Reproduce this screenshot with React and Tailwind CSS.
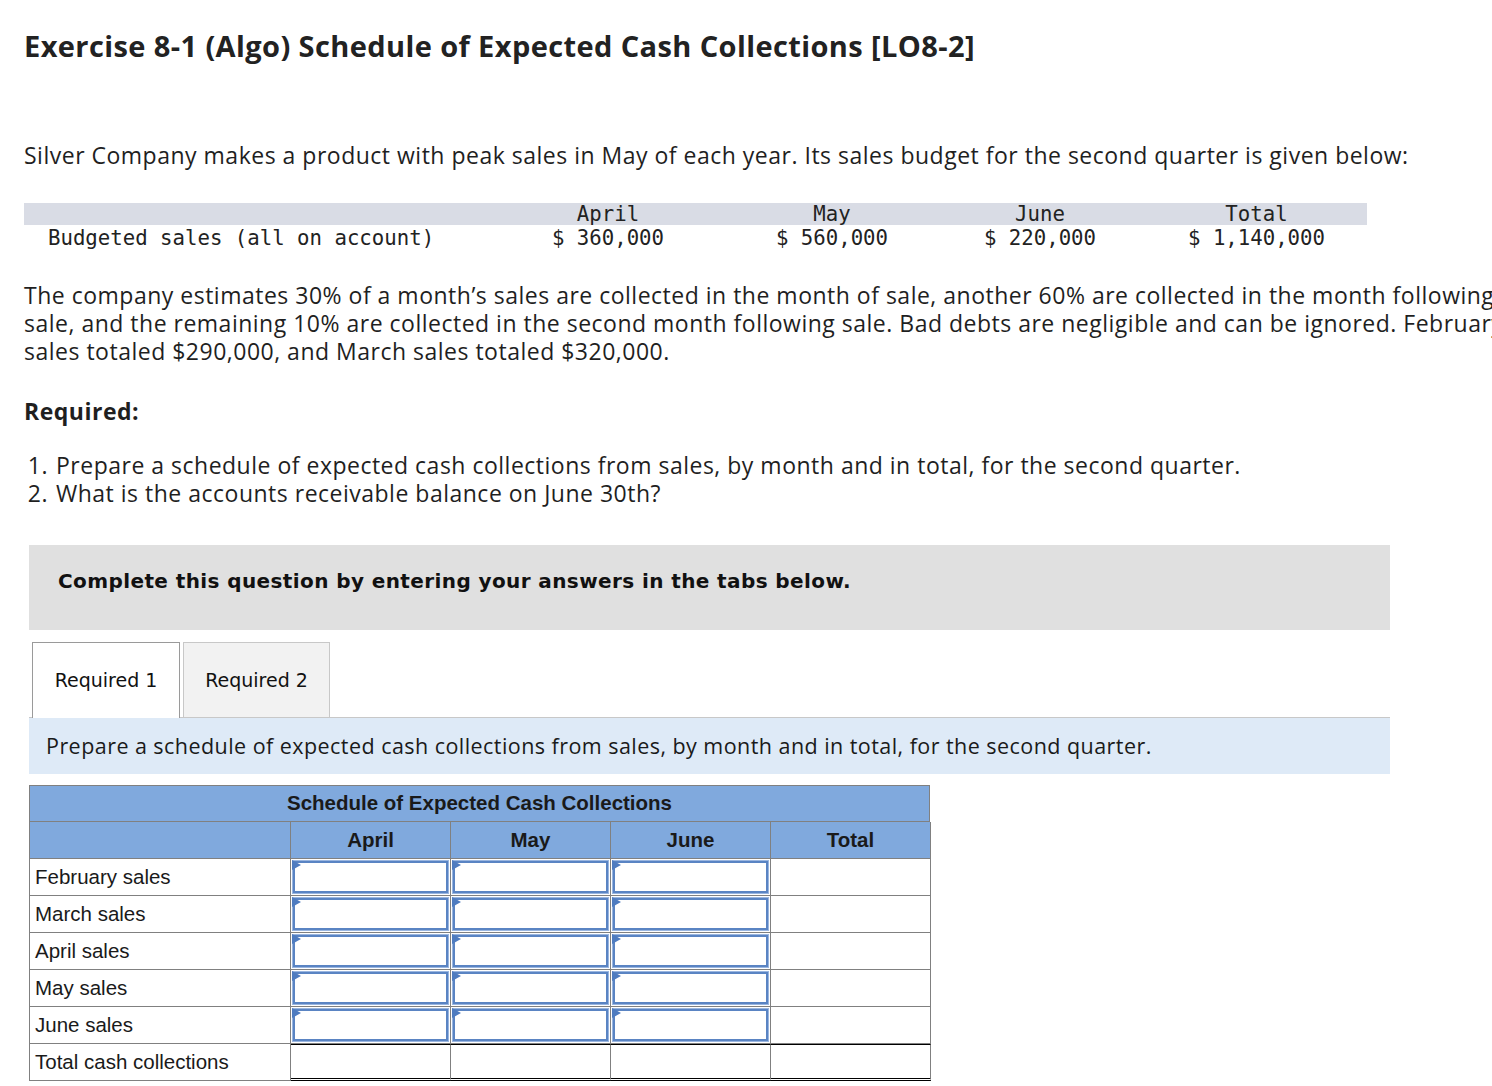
import React from 'react'

const body = { fontFamily: '"Open Sans", Lato, sans-serif' }
const verdana = { fontFamily: '"DejaVu Sans", Verdana, sans-serif' }
const arial = { fontFamily: '"Liberation Sans", Arial, sans-serif' }
const mono = { fontFamily: '"DejaVu Sans Mono", "Liberation Mono", monospace' }

const InputCell = () => (
    <div className="h-full p-[1px] border-r border-b border-[#808080]">
        <div className="relative h-full border border-[#9ab6e0]">
            <div className="h-full border-2 border-[#5a84c3]" />
            <svg className="absolute -left-[1px] -top-[1px]" width="9" height="10" viewBox="0 0 9 10">
                <polygon points="0,0 9,5 0,10" fill="#4f7cc0" />
            </svg>
        </div>
    </div>
)

const PlainCell = ({ children, className = '' }) => (
    <div className={"h-full border-r border-b border-[#808080] " + className}>{children}</div>
)

const App = () => {
    const budget = [
        { month: 'April', value: '$ 360,000' },
        { month: 'May', value: '$ 560,000' },
        { month: 'June', value: '$ 220,000' },
        { month: 'Total', value: '$ 1,140,000' },
    ]
    const rows = ['February sales', 'March sales', 'April sales', 'May sales', 'June sales']

    return (
        <div className="w-[1492px] overflow-hidden bg-white text-[#1f1f1f]" style={body}>
            <div className="pl-[24px] pt-[28px] pb-[40px]">
                <h1 className="text-[29px] leading-[36px] font-bold tracking-[0.4px] whitespace-nowrap text-[#222]">
                    Exercise 8-1 (Algo) Schedule of Expected Cash Collections [LO8-2]
                </h1>

                <p className="mt-[77px] text-[23px] leading-[28px] tracking-[0.5px] whitespace-nowrap">
                    Silver Company makes a product with peak sales in May of each year. Its sales budget for the second quarter is given below:
                </p>

                {/* budget table */}
                <div className="mt-[34px] w-[1343px] text-[20.7px] text-[#222]" style={mono}>
                    <div className="grid grid-cols-[472px_224px_224px_192px_241px] h-[22px] leading-[22px] bg-[#d9dce5]">
                        <div />
                        {budget.map((b) => (
                            <div key={b.month} className="text-center">{b.month}</div>
                        ))}
                    </div>
                    <div className="grid grid-cols-[472px_224px_224px_192px_241px] h-[26px] leading-[26px]">
                        <div className="pl-[24px] whitespace-nowrap">Budgeted sales (all on account)</div>
                        {budget.map((b) => (
                            <div key={b.month} className="text-center whitespace-nowrap">{b.value}</div>
                        ))}
                    </div>
                </div>

                <p className="mt-[30px] text-[23px] leading-[28px] tracking-[0.5px] whitespace-nowrap">
                    The company estimates 30% of a month’s sales are collected in the month of sale, another 60% are collected in the month following<br />
                    sale, and the remaining 10% are collected in the second month following sale. Bad debts are negligible and can be ignored. February<br />
                    sales totaled $290,000, and March sales totaled $320,000.
                </p>

                <p className="mt-[32px] text-[23px] leading-[28px] tracking-[0.5px] font-bold">Required:</p>

                <ol className="mt-[26px] text-[23px] leading-[28px] tracking-[0.5px]">
                    <li className="flex"><span className="w-[32px] text-right pr-[8px]">1.</span>Prepare a schedule of expected cash collections from sales, by month and in total, for the second quarter.</li>
                    <li className="flex"><span className="w-[32px] text-right pr-[8px]">2.</span>What is the accounts receivable balance on June 30th?</li>
                </ol>

                {/* instructions */}
                <div className="mt-[38px] ml-[5px] w-[1361px] h-[85px] bg-[#e0e0e0] pl-[29px] pt-[24px]">
                    <p className="text-[20px] leading-[24px] font-bold tracking-[0.4px] text-[#111]" style={verdana}>
                        Complete this question by entering your answers in the tabs below.
                    </p>
                </div>

                {/* tabs */}
                <div className="mt-[12px] ml-[8px] flex gap-[3px] relative z-10" style={verdana}>
                    <div className="w-[148px] h-[76px] bg-white border border-b-0 border-[#9a9a9a] flex items-center justify-center text-[19px] text-[#111]">
                        Required 1
                    </div>
                    <div className="w-[147px] h-[75px] bg-[#f2f2f2] border border-b-0 border-[#c8c8c8] flex items-center justify-center text-[19px] text-[#111]">
                        Required 2
                    </div>
                </div>
                <div className="-mt-[1px] ml-[5px] w-[1361px] h-[57px] bg-[#deeaf7] border-t border-[#c8c8c8] pl-[17px] flex items-center">
                    <p className="text-[21.5px] tracking-[0.45px] whitespace-nowrap text-[#1a1a1a]">
                        Prepare a schedule of expected cash collections from sales, by month and in total, for the second quarter.
                    </p>
                </div>

                {/* schedule */}
                <div className="mt-[11px] ml-[5px] w-[901px] text-[20.5px] text-[#1a1a1a]" style={arial}>
                    <div className="h-[37px] bg-[#80a9dd] border border-[#808080] flex items-center justify-center font-bold">
                        Schedule of Expected Cash Collections
                    </div>
                    <div className="grid grid-cols-[261px_160px_160px_160px_160px] h-[37px] bg-[#80a9dd] border-l border-[#808080] font-bold">
                        <PlainCell />
                        {['April', 'May', 'June', 'Total'].map((m) => (
                            <PlainCell key={m} className="flex items-center justify-center">{m}</PlainCell>
                        ))}
                    </div>
                    {rows.map((r) => (
                        <div key={r} className="grid grid-cols-[261px_160px_160px_160px_160px] h-[37px] border-l border-[#808080]">
                            <PlainCell className="flex items-center pl-[5px]">{r}</PlainCell>
                            <InputCell />
                            <InputCell />
                            <InputCell />
                            <PlainCell />
                        </div>
                    ))}
                    <div className="grid grid-cols-[261px_160px_160px_160px_160px] h-[37px] border-l border-[#808080]">
                        <PlainCell className="flex items-center pl-[5px]">Total cash collections</PlainCell>
                        {[0, 1, 2, 3].map((i) => (
                            <div key={i} className="h-full border-t border-t-black border-b-[3px] border-b-black border-double border-r border-r-[#808080]" />
                        ))}
                    </div>
                </div>
            </div>
        </div>
    )
}

export default App
